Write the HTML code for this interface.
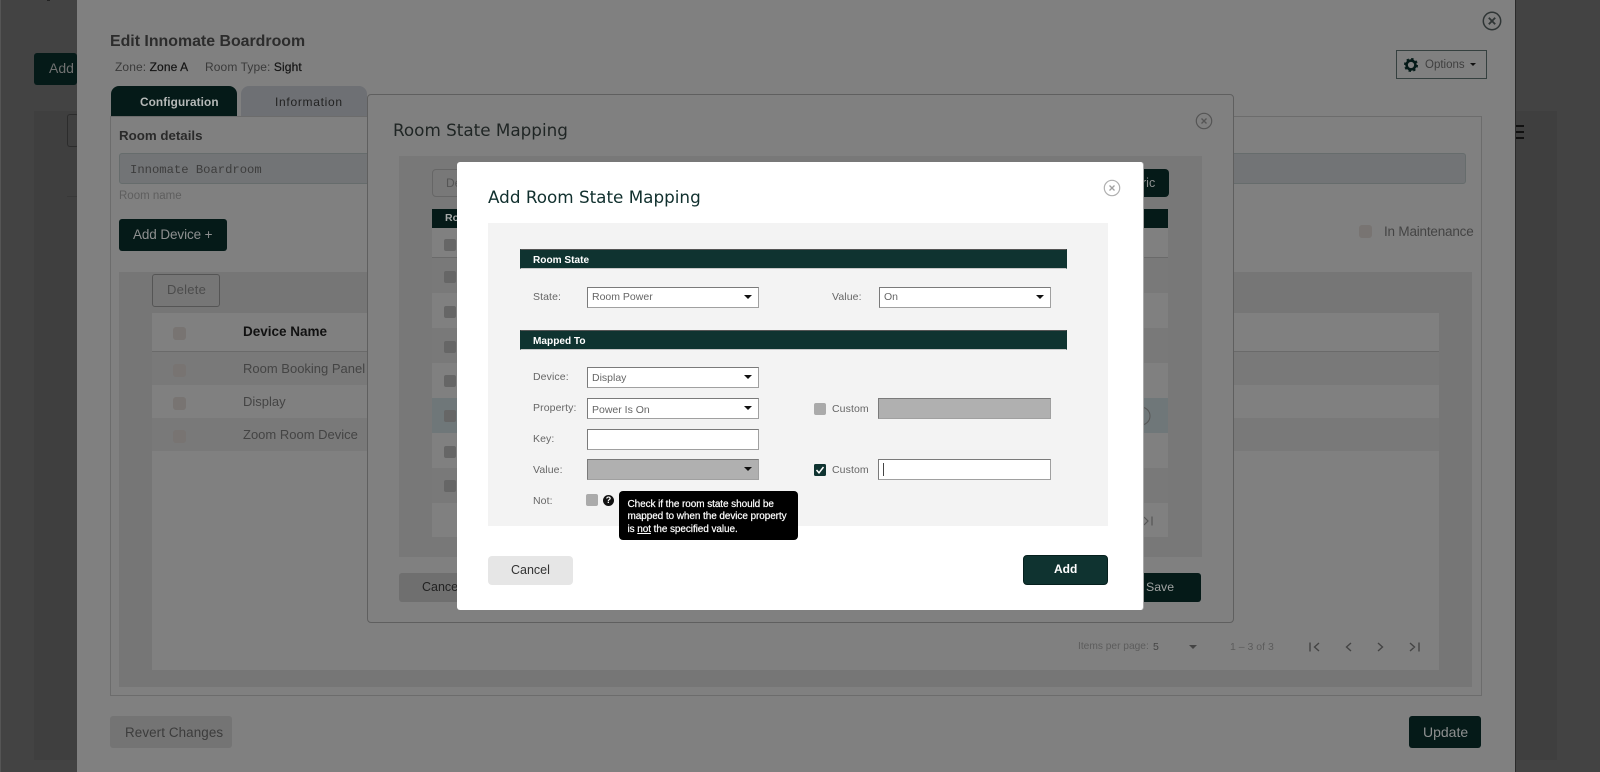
<!DOCTYPE html>
<html><head><meta charset="utf-8"><title>Add Room State Mapping</title>
<style>
html,body{margin:0;padding:0;width:1600px;height:772px;overflow:hidden;background:#434343;font-family:"Liberation Sans",sans-serif}
div,span.a,svg{position:absolute;box-sizing:border-box}
.t{white-space:nowrap;line-height:20px;height:20px}
.lab{font-size:10.5px;color:#666;letter-spacing:.1px}
.sel{background:#fff;border:1px solid #a0a0a0;border-left-color:#7a7a7a;border-top-color:#7a7a7a;height:21px;font-size:10.5px;color:#666;line-height:19px;padding-left:4px;white-space:nowrap;width:172px}
.sel i{position:absolute;right:6px;top:7px;width:0;height:0;border-left:4px solid transparent;border-right:4px solid transparent;border-top:4.5px solid #111}
.bar{left:520px;width:547px;height:20px;background:#0f3330;border:1px solid #c8c8c8;border-left-color:#0f3330;border-right-color:#0f3330;border-top-color:#555;color:#fff;font-weight:bold;font-size:10.1px;line-height:21px;padding-left:12px}
.cb{background:#aaa;border-radius:2px}
.r{left:432px;width:736px;height:35px}
.c2{left:444px;width:12px;height:12px;background:#666;border-radius:2px}
.c1{left:173px;width:13px;height:13px;background:#787472;border-radius:3px}
</style></head><body>

<!-- backdrop -->
<div style="left:0;top:0;width:1px;height:772px;background:#555"></div>
<div style="left:47px;top:0;width:3px;height:1px;background:#222"></div>
<div style="left:34px;top:111px;width:1523px;height:649px;background:#3f3f3f"></div>
<div style="left:34px;top:53px;width:43px;height:32px;background:#051a18;border-radius:3px"></div>
<div class="t" style="left:49px;top:58px;color:#6f7070;font-size:14px">Add</div>
<div style="left:67px;top:114px;width:12px;height:33px;border:1px solid #2c2c2c;border-radius:3px"></div>
<div style="left:67px;top:196px;width:10px;height:1px;background:#383838"></div>
<div style="left:1515px;top:125px;width:9px;height:2px;background:#111"></div>
<div style="left:1515px;top:131px;width:9px;height:2px;background:#111"></div>
<div style="left:1515px;top:137px;width:9px;height:2px;background:#111"></div>
<div style="left:1515px;top:0;width:1px;height:772px;background:#2a2a2a"></div>

<!-- outer modal -->
<div style="left:77px;top:0;width:1438px;height:772px;background:#808080"></div>
<div class="t" style="left:110px;top:32px;font-size:15.9px;font-weight:bold;color:#2c2c2c">Edit Innomate Boardroom</div>
<div class="t" style="left:115px;top:57px;font-size:12px;color:#3a3a3a;letter-spacing:.1px">Zone: <span style="color:#141414;-webkit-text-stroke:.2px #141414">Zone A</span></div>
<div class="t" style="left:205px;top:57px;font-size:12px;color:#3a3a3a;letter-spacing:.1px">Room Type: <span style="color:#141414;-webkit-text-stroke:.2px #141414">Sight</span></div>
<svg style="left:1482px;top:11px" width="20" height="20" viewBox="0 0 20 20"><circle cx="10" cy="10" r="8.7" fill="none" stroke="#2f3535" stroke-width="1.5"/><path d="M6.8 6.8l6.4 6.4M13.2 6.8l-6.4 6.4" stroke="#2f3535" stroke-width="1.8"/></svg>
<div style="left:1396px;top:50px;width:91px;height:29px;border:1.5px solid #35403f"></div>
<svg style="left:1404px;top:57.5px" width="14" height="14" viewBox="0 0 14 14"><circle cx="7" cy="7" r="4.4" fill="none" stroke="#051a18" stroke-width="2.6"/><circle cx="7" cy="7" r="6" fill="none" stroke="#051a18" stroke-width="2" stroke-dasharray="2.4 2.31"/></svg>
<div class="t" style="left:1425px;top:54.5px;font-size:11.5px;color:#3f3f3f">Options</div>
<div style="left:1470px;top:63px;width:0;height:0;border-left:3px solid transparent;border-right:3px solid transparent;border-top:3px solid #111"></div>

<div style="left:111px;top:86px;width:126px;height:31px;background:#051a18;border-radius:8px 8px 0 0"></div>
<div class="t" style="left:140px;top:92px;font-size:11.8px;font-weight:bold;color:#b6b9b8;letter-spacing:.1px">Configuration</div>
<div style="left:241px;top:86px;width:126px;height:31px;background:#6e7074;border-radius:8px 8px 0 0"></div>
<div class="t" style="left:275px;top:92px;font-size:12px;color:#222;letter-spacing:.7px">Information</div>

<div style="left:110px;top:116px;width:1372px;height:580px;border:1px solid #6c6c6c"></div>
<div class="t" style="left:119px;top:126px;font-size:13.3px;font-weight:bold;color:#2a2a2a">Room details</div>
<div style="left:119px;top:153px;width:1347px;height:31px;background:#727476;border:1px solid #666c6c;border-radius:3px"></div>
<div class="t" style="left:130px;top:160px;font-family:'Liberation Mono',monospace;font-size:12.2px;color:#3d3d3d">Innomate Boardroom</div>
<div class="t" style="left:119px;top:186px;font-size:11.5px;color:#5e5e5e">Room name</div>
<div style="left:119px;top:219px;width:108px;height:32px;background:#051a18;border-radius:3px"></div>
<div class="t" style="left:133px;top:225px;font-size:13.5px;color:#8e9090;letter-spacing:-.1px">Add Device +</div>
<div style="left:1359px;top:225px;width:13px;height:13px;background:#787472;border-radius:3px"></div>
<div class="t" style="left:1384px;top:222px;font-size:13.5px;color:#444;letter-spacing:-.2px">In Maintenance</div>

<div style="left:119px;top:272px;width:1353px;height:415px;background:#767676"></div>
<div style="left:152px;top:313px;width:1287px;height:357px;background:#808080"></div>
<div style="left:152px;top:351px;width:1287px;height:1px;background:#6a6a6a"></div>
<div style="left:152px;top:352px;width:1287px;height:33px;background:#797979"></div>
<div style="left:152px;top:418px;width:1287px;height:33px;background:#797979"></div>
<div style="left:152px;top:274px;width:68px;height:33px;border:1px solid #555;border-radius:3px"></div>
<div class="t" style="left:167px;top:280px;font-size:13px;color:#4c4c4c;letter-spacing:.25px">Delete</div>
<div class="c1" style="top:327px"></div><div class="c1" style="top:364px"></div><div class="c1" style="top:397px"></div><div class="c1" style="top:430px"></div>
<div class="t" style="left:243px;top:322px;font-size:13.5px;font-weight:bold;color:#111">Device Name</div>
<div class="t" style="left:243px;top:359px;font-size:13px;color:#444">Room Booking Panel</div>
<div class="t" style="left:243px;top:392px;font-size:13px;color:#444">Display</div>
<div class="t" style="left:243px;top:425px;font-size:13px;color:#444">Zoom Room Device</div>

<div class="t" style="left:1078px;top:637px;font-size:10.2px;color:#5c5c5c">Items per page:</div>
<div class="t" style="left:1153px;top:637px;font-size:10.5px;color:#444">5</div>
<div style="left:1189px;top:645px;width:0;height:0;border-left:4.5px solid transparent;border-right:4.5px solid transparent;border-top:4.5px solid #444"></div>
<div class="t" style="left:1230px;top:637px;font-size:10.5px;color:#5c5c5c">1 – 3 of 3</div>
<svg style="left:1305px;top:640px" width="120" height="14" viewBox="0 0 120 14" fill="none" stroke="#444" stroke-width="1.4"><path d="M5 2.5v9M14 3l-4.5 4 4.5 4M46 3l-4.5 4 4.5 4M73 3l4.5 4-4.5 4M105 3l4.5 4-4.5 4M114 2.5v9"/></svg>

<div style="left:110px;top:716px;width:122px;height:32px;background:#747474;border-radius:3px"></div>
<div class="t" style="left:125px;top:723px;font-size:13.4px;color:#3c3c3c;letter-spacing:.1px">Revert Changes</div>
<div style="left:1409px;top:716px;width:72px;height:32px;background:#051a18;border-radius:3px"></div>
<div class="t" style="left:1423px;top:722px;font-size:14px;color:#8e9090">Update</div>

<!-- middle modal -->
<div style="left:367px;top:94px;width:867px;height:529px;background:#808080;border:1px solid #5f5f5f;border-radius:4px"></div>
<div class="t" style="left:393px;top:120px;font-family:'DejaVu Sans',sans-serif;font-size:16.8px;color:#1f2524">Room State Mapping</div>
<svg style="left:1195px;top:112px" width="18" height="18" viewBox="0 0 18 18"><circle cx="9" cy="9" r="7.7" fill="none" stroke="#555" stroke-width="1.2"/><path d="M6.5 6.5l5 5M11.5 6.5l-5 5" stroke="#555" stroke-width="1.3"/></svg>
<div style="left:399px;top:156px;width:803px;height:401px;background:#787878"></div>
<div style="left:432px;top:169px;width:60px;height:28px;border:1px solid #666;border-radius:4px"></div>
<div class="t" style="left:446px;top:173px;font-size:12px;color:#555">De</div>
<div style="left:1100px;top:169px;width:69px;height:28px;background:#051a18;border-radius:4px"></div>
<div class="t" style="left:1142px;top:173px;font-size:12.5px;color:#8e9090">ric</div>
<div style="left:432px;top:209px;width:736px;height:19px;background:#051a18"></div>
<div class="t" style="left:445px;top:208px;font-size:10.5px;font-weight:bold;color:#a8abaa">Ro</div>
<div class="r" style="top:228px;height:30px;background:#808080;border-bottom:1px solid #6a6a6a"></div>
<div class="r" style="top:258px;background:#797979"></div>
<div class="r" style="top:293px;background:#808080"></div>
<div class="r" style="top:328px;background:#797979"></div>
<div class="r" style="top:363px;background:#808080"></div>
<div class="r" style="top:398px;background:#6f7779"></div>
<div class="r" style="top:433px;background:#808080"></div>
<div class="r" style="top:468px;background:#797979"></div>
<div class="r" style="top:503px;height:34px;background:#808080"></div>
<div class="c2" style="top:239px"></div><div class="c2" style="top:271px"></div><div class="c2" style="top:306px"></div><div class="c2" style="top:341px"></div><div class="c2" style="top:375px"></div><div class="c2" style="top:410px"></div><div class="c2" style="top:446px"></div><div class="c2" style="top:480px"></div>
<svg style="left:1130px;top:405px" width="22" height="22" viewBox="0 0 22 22"><circle cx="11" cy="11" r="9" fill="none" stroke="#555" stroke-width="1"/></svg>
<svg style="left:1143px;top:514px" width="12" height="14" viewBox="0 0 12 14" fill="none" stroke="#555" stroke-width="1.2"><path d="M1 3l4 4-4 4M9 2.5v9"/></svg>
<div style="left:399px;top:573px;width:71px;height:29px;background:#6f6f6f;border-radius:3px"></div>
<div class="t" style="left:422px;top:577px;font-size:12.5px;color:#222">Cancel</div>
<div style="left:1120px;top:573px;width:81px;height:29px;background:#051a18;border-radius:3px"></div>
<div class="t" style="left:1146px;top:577px;font-size:12.3px;color:#a0a3a2">Save</div>

<!-- top modal -->
<div style="left:457px;top:162px;width:687px;height:448px;background:#fff;border-radius:3px;border-right:1px solid #a8a8a8"></div>
<div class="t" style="left:488px;top:187px;font-family:'DejaVu Sans',sans-serif;font-size:16.8px;color:#11302e">Add Room State Mapping</div>
<svg style="left:1103px;top:179px" width="18" height="18" viewBox="0 0 18 18"><circle cx="9" cy="9" r="7.7" fill="none" stroke="#b0b0b0" stroke-width="1.2"/><path d="M6.5 6.5l5 5M11.5 6.5l-5 5" stroke="#a0a0a0" stroke-width="1.3"/></svg>
<div style="left:488px;top:223px;width:620px;height:303px;background:#f3f3f3"></div>

<div class="bar" style="top:249px">Room State</div>
<div class="t lab" style="left:533px;top:287px">State:</div>
<div class="sel" style="left:587px;top:287px">Room Power<i></i></div>
<div class="t lab" style="left:832px;top:287px">Value:</div>
<div class="sel" style="left:879px;top:287px">On<i></i></div>

<div class="bar" style="top:330px">Mapped To</div>
<div class="t lab" style="left:533px;top:367px">Device:</div>
<div class="sel" style="left:587px;top:367px;line-height:21px">Display<i></i></div>
<div class="t lab" style="left:533px;top:398px">Property:</div>
<div class="sel" style="left:587px;top:398px;line-height:22px">Power Is On<i></i></div>
<div class="cb" style="left:814px;top:403px;width:12px;height:12px"></div>
<div class="t lab" style="left:832px;top:399px">Custom</div>
<div class="sel" style="left:878px;top:398px;width:173px;background:#b0b0b0"></div>
<div class="t lab" style="left:533px;top:429px">Key:</div>
<div class="sel" style="left:587px;top:429px"></div>
<div class="t lab" style="left:533px;top:460px">Value:</div>
<div class="sel" style="left:587px;top:459px;background:#b0b0b0"><i></i></div>
<svg style="left:814px;top:464px" width="12" height="12" viewBox="0 0 12 12"><rect width="12" height="12" rx="1.5" fill="#0f3330"/><path d="M2.5 6l2.5 2.800L9.500 3" fill="none" stroke="#fff" stroke-width="1.500"/></svg>
<div class="t lab" style="left:832px;top:460px">Custom</div>
<div class="sel" style="left:878px;top:459px;width:173px"></div>
<div style="left:883px;top:463px;width:1px;height:13px;background:#444"></div>
<div class="t lab" style="left:533px;top:491px">Not:</div>
<div class="cb" style="left:586px;top:494px;width:12px;height:12px"></div>
<div style="left:603px;top:495px;width:11px;height:11px;border-radius:50%;background:#111;color:#fff;font-size:9px;font-weight:bold;line-height:11px;text-align:center">?</div>
<div style="left:619px;top:491px;width:179px;height:49px;background:#000;border-radius:4px;color:#fff;font-size:10px;line-height:12.8px;padding:7.5px 0 0 8.5px;white-space:nowrap;letter-spacing:-.08px;-webkit-text-stroke:.2px #fff">Check if the room state should be<br>mapped to when the device property<br>is <u>not</u> the specified value.</div>

<div style="left:488px;top:556px;width:85px;height:29px;background:#e6e6e6;border-radius:4px"></div>
<div class="t" style="left:511px;top:560px;font-size:12.5px;color:#333">Cancel</div>
<div style="left:1023px;top:555px;width:85px;height:30px;background:#0f3330;border:1px solid #06201e;border-radius:4px"></div>
<div class="t" style="left:1054px;top:559px;font-size:12px;color:#fff;font-weight:bold">Add</div>
</body></html>
